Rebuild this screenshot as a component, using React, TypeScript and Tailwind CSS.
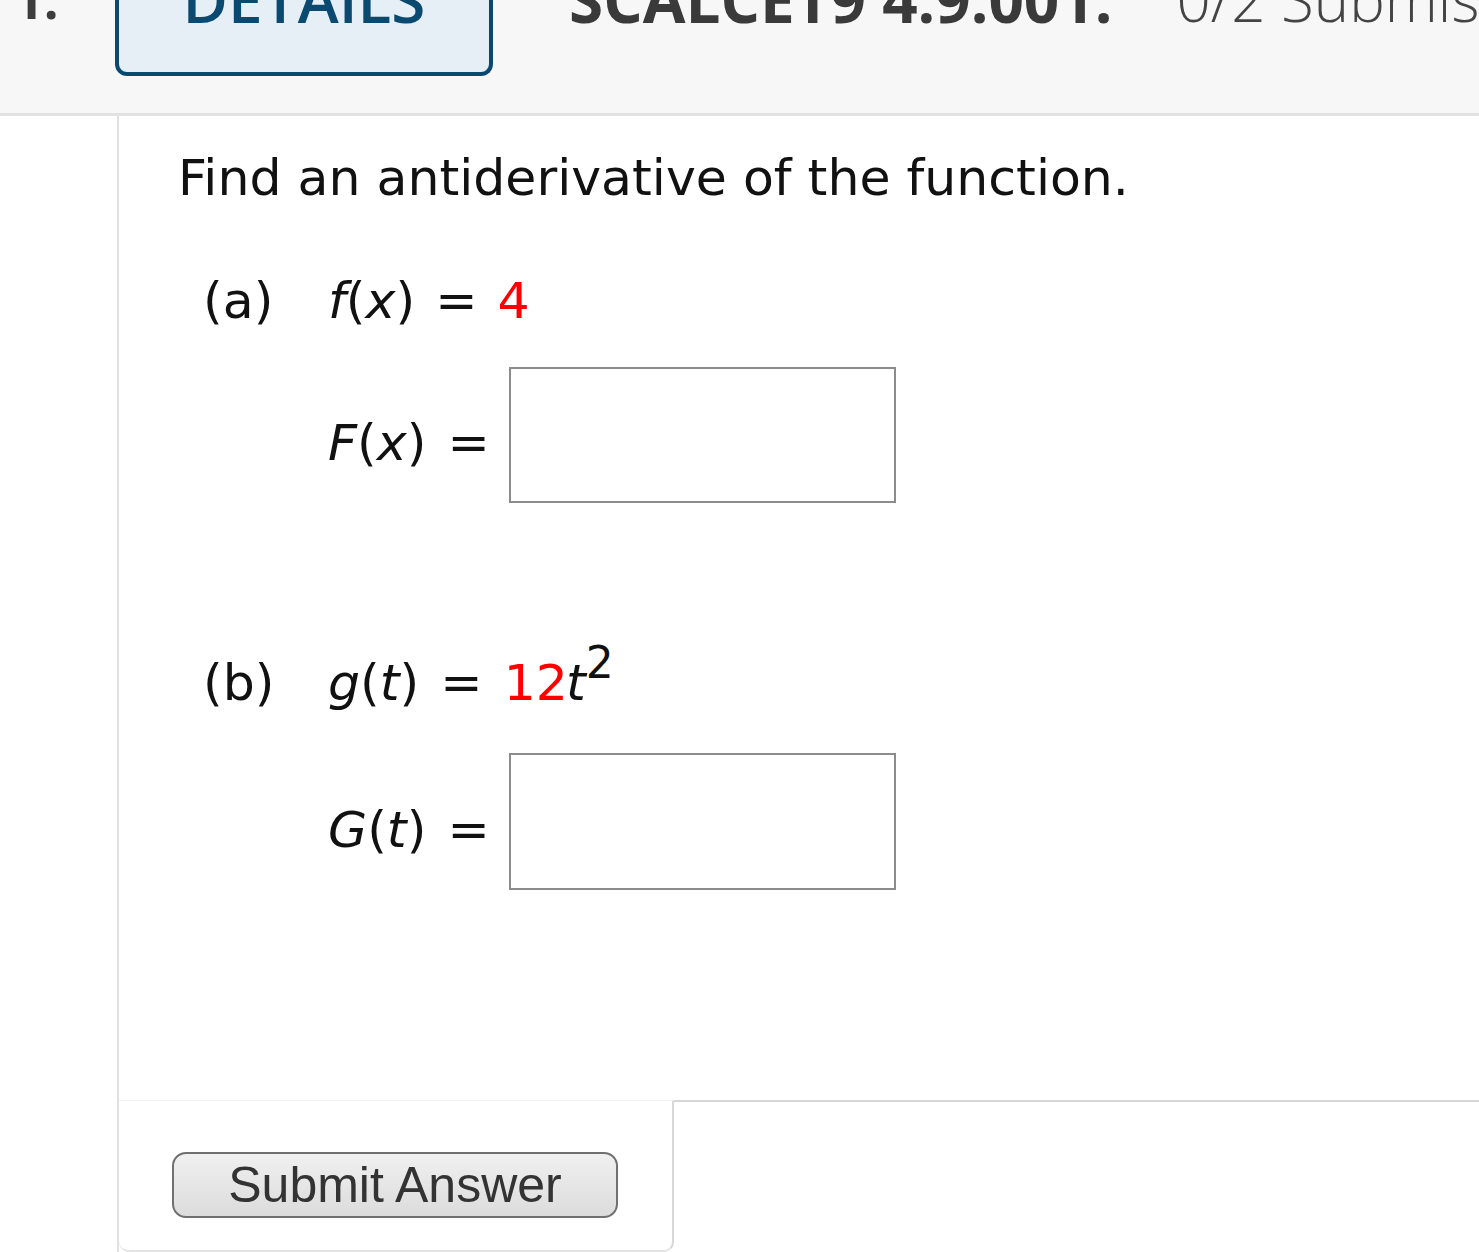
export default function App() {
  const math = "font-['DejaVu_Sans',Verdana,sans-serif] text-[50.5px] leading-[58px] text-[#111]";
  return (
    <div className="w-[1479px] h-[1252px] overflow-hidden bg-white">
      {/* question header, scrolled so only the bottom of it shows */}
      <header className="h-[116px] bg-[#f7f7f7] border-b-[3px] border-[#e2e2e2] overflow-hidden font-['Open_Sans',sans-serif]">
        <div className="flex items-start -mt-[31px] whitespace-nowrap">
          <span className="shrink-0 ml-[14px] w-[41px] text-[52px] leading-[60px] font-bold text-[#3d3d3d]">1.</span>
          <div className="shrink-0 ml-[60px] w-[378px] h-[107px] bg-[#e7eff6] border-4 border-t-0 border-[#0b4a70] rounded-b-[12px] flex justify-center">
            <span className="text-[62px] leading-[60px] font-semibold text-[#0b4a70]">DETAILS</span>
          </div>
          <span className="shrink-0 ml-[76px] text-[62px] leading-[60px] font-bold text-[#3a3a3a]">SCALCET9 4.9.001.</span>
          <span className="shrink-0 ml-[64px] text-[60px] leading-[60px] font-light text-[#444]">0/2 Submissions Used</span>
        </div>
      </header>

      <main className="ml-[117px] h-[1136px] border-l-2 border-[#e0e0e0] flex flex-col">
        <div className="flex-1 pt-[33px] pl-[59px]">
          <p className={math}>Find an antiderivative of the function.</p>

          <div className={`${math} mt-[65px] ml-[25px] flex whitespace-nowrap`}>
            <span className="w-[125px]">(a)</span>
            <span>
              <i>f</i>(<i>x</i>) <span className="mx-[4px]">=</span> <span className="text-[#ff0000]">4</span>
            </span>
          </div>

          <div className="mt-[37px] ml-[150px] flex items-start">
            <span className={`${math} mt-[47px] whitespace-nowrap`}>
              <i>F</i>(<i>x</i>) <span className="ml-[5px]">=</span>
            </span>
            <div className="ml-[19px] w-[387px] h-[136px] border-2 border-[#8c8c8c] bg-white" />
          </div>

          <div className={`${math} mt-[151px] ml-[25px] flex whitespace-nowrap`}>
            <span className="w-[125px]">(b)</span>
            <span>
              <i>g</i>(<i>t</i>) <span className="mx-[5px]">=</span> <span className="text-[#ff0000]">12</span>
              <i className="-ml-[2px]">t</i>
              <sup className="text-[44px]">2</sup>
            </span>
          </div>

          <div className="mt-[41px] ml-[150px] flex items-start">
            <span className={`${math} mt-[48px] whitespace-nowrap`}>
              <i>G</i>(<i>t</i>) <span className="ml-[5px]">=</span>
            </span>
            <div className="ml-[19px] w-[387px] h-[137px] border-2 border-[#8c8c8c] bg-white" />
          </div>
        </div>

        <div className="h-[152px] flex">
          <div className="w-[555px] border-t border-[#f2f2f2] border-r-2 border-r-[#d8d8d8] border-b-2 border-b-[#e2e2e2] rounded-b-[10px]">
            <button className="ml-[53px] mt-[51px] w-[446px] h-[66px] rounded-[14px] border-2 border-[#707070] bg-gradient-to-b from-[#f0f0f0] to-[#dcdcdc] font-['Liberation_Sans',Arial,sans-serif] text-[50px] leading-[60px] text-[#333]">
              Submit Answer
            </button>
          </div>
          <div className="flex-1 border-t-2 border-[#d6d6d6]" />
        </div>
      </main>
    </div>
  );
}
